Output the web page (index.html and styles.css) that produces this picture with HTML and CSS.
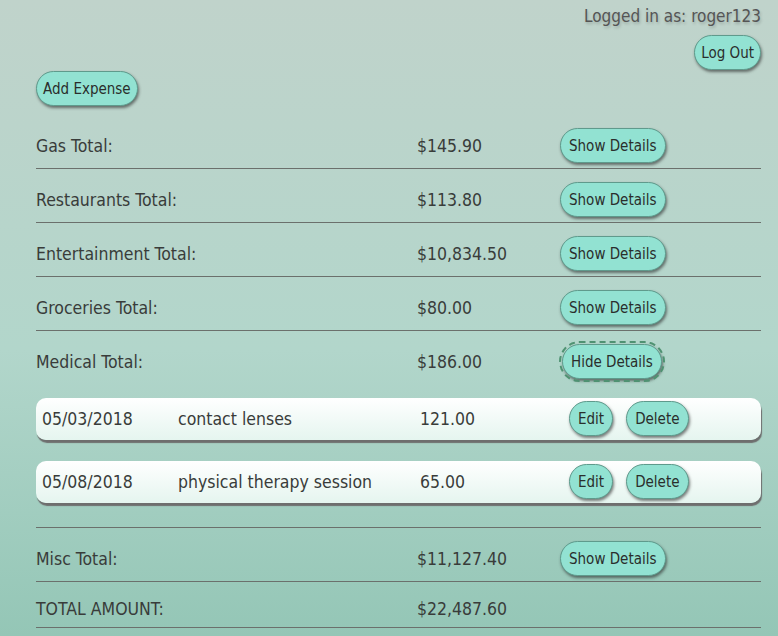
FILE: index.html
```html
<!DOCTYPE html>
<html lang="en">
<head>
  <meta charset="UTF-8">
  <title>Expenses</title>
  <link rel="stylesheet" href="styles.css">
</head>
<body>
  <div class="page">
    <div class="user-bar">
      <span class="user-name">Logged in as: roger123</span>
      <button class="btn logout-btn">Log Out</button>
    </div>

    <button class="btn add-btn">Add Expense</button>

    <div class="category">
      <span class="cat-label">Gas Total:</span>
      <span class="cat-amount">$145.90</span>
      <div><button class="btn">Show Details</button></div>
    </div>

    <div class="category">
      <span class="cat-label">Restaurants Total:</span>
      <span class="cat-amount">$113.80</span>
      <div><button class="btn">Show Details</button></div>
    </div>

    <div class="category">
      <span class="cat-label">Entertainment Total:</span>
      <span class="cat-amount">$10,834.50</span>
      <div><button class="btn">Show Details</button></div>
    </div>

    <div class="category">
      <span class="cat-label">Groceries Total:</span>
      <span class="cat-amount">$80.00</span>
      <div><button class="btn">Show Details</button></div>
    </div>

    <div class="category open">
      <span class="cat-label">Medical Total:</span>
      <span class="cat-amount">$186.00</span>
      <div><button class="btn focused">Hide Details</button></div>

      <div class="details">
        <div class="expense">
          <span>05/03/2018</span>
          <span>contact lenses</span>
          <span>121.00</span>
          <div class="actions">
            <button class="btn">Edit</button>
            <button class="btn">Delete</button>
          </div>
        </div>
        <div class="expense">
          <span>05/08/2018</span>
          <span>physical therapy session</span>
          <span>65.00</span>
          <div class="actions">
            <button class="btn">Edit</button>
            <button class="btn">Delete</button>
          </div>
        </div>
      </div>
    </div>

    <div class="category">
      <span class="cat-label">Misc Total:</span>
      <span class="cat-amount">$11,127.40</span>
      <div><button class="btn">Show Details</button></div>
    </div>

    <div class="category total">
      <span class="cat-label">TOTAL AMOUNT:</span>
      <span class="cat-amount">$22,487.60</span>
      <div></div>
    </div>
  </div>
</body>
</html>
```

FILE: styles.css
```css
html, body {
  margin: 0;
  height: 100%;
}
body {
  font-family: 'DejaVu Sans Condensed', 'DejaVu Sans', sans-serif;
  background: linear-gradient(to bottom, #c0d3cb, #b2d6cb 55%, #94c6b6);
  color: #393c3a;
}
.page {
  padding: 0 17px 0 36px;
}
.user-bar {
  display: flex;
  flex-direction: column;
  align-items: flex-end;
}
.user-name {
  margin-top: 6px;
  font-size: 17px;
  color: #555;
  text-shadow: 1px 2px 3px rgba(0,0,0,0.2);
}
.btn {
  font-family: inherit;
  font-size: 15px;
  color: #2a2e2c;
  background: #92e2d2;
  border: 1px solid #5f9a8c;
  border-radius: 18px;
  height: 35px;
  padding: 0 8px;
  box-shadow: 1px 2px 3px rgba(40,40,40,0.6);
  cursor: pointer;
}
.user-bar .btn {
  margin-top: 9px;
}
.logout-btn {
  padding: 0 6px;
}
.add-btn {
  margin-top: 1px;
  padding: 0 6px;
}
.category {
  display: grid;
  grid-template-columns: 381px 143px 1fr;
  align-items: center;
  min-height: 35px;
  padding: 13px 0 5px;
  border-bottom: 1px solid #6b706c;
  font-size: 17.5px;
}
.add-btn + .category {
  margin-top: 9px;
}
.total {
  min-height: 27px;
}
.focused {
  outline: 2px dashed #4f9272;
  outline-offset: 1px;
  margin-left: 2px;
}
.details {
  grid-column: 1 / -1;
  display: flex;
  flex-direction: column;
  gap: 21px;
  margin-top: 19px;
  padding-bottom: 19px;
}
.expense {
  display: grid;
  grid-template-columns: 136px 242px 149px 1fr;
  align-items: center;
  padding: 3px 6px 4px;
  background: linear-gradient(to bottom, #ffffff, #e5f5ef);
  border-radius: 10px;
  box-shadow: 1px 3px 1px #6e6e6e;
}
.actions {
  display: flex;
  gap: 13px;
}
```
